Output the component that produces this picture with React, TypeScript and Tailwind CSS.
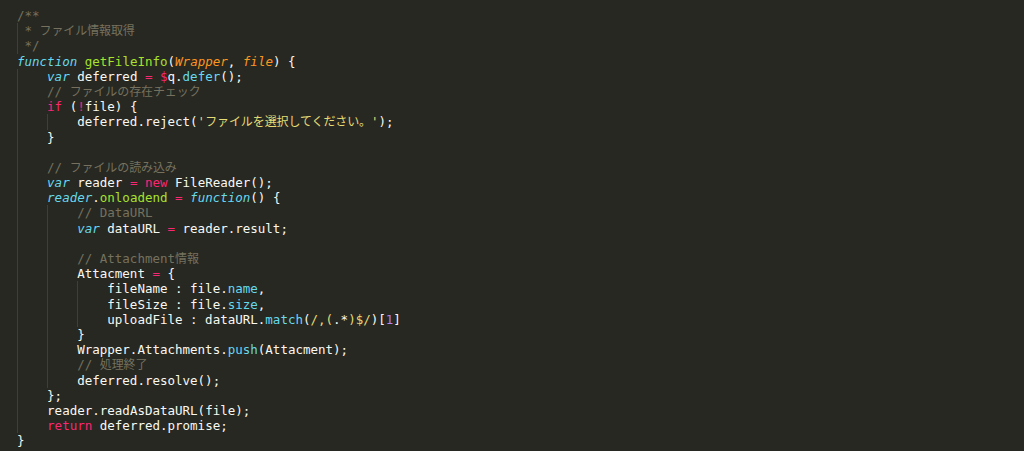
import React from "react";

type Tok = [string, string?];

const W = "text-[#f8f8f2]";
const C = "text-[#75715e]";
const K = "text-[#f92672]";
const S = "italic text-[#66d9ef]";
const F = "text-[#a6e22e]";
const P = "italic text-[#fd971f]";
const Y = "text-[#e6db74]";
const B = "text-[#66d9ef]";
const N = "text-[#ae81ff]";

type Line = { g: number; first?: boolean; t: Tok[] };

const lines: Line[] = [
  { g: 0, t: [["/**", C]] },
  { g: 1, first: true, t: [["* ファイル情報取得", C]] },
  { g: 1, first: true, t: [["*/", C]] },
  {
    g: 0,
    t: [["function", S], [" "], ["getFileInfo", F], ["("], ["Wrapper", P], [", "], ["file", P], [") {"]],
  },
  { g: 1, t: [["var", S], [" deferred "], ["=", K], [" "], ["$", K], ["q."], ["defer", B], ["();"]] },
  { g: 1, t: [["// ファイルの存在チェック", C]] },
  { g: 1, t: [["if", K], [" ("], ["!", K], ["file) {"]] },
  { g: 2, t: [["deferred.reject("], ["'ファイルを選択してください。'", Y], [");"]] },
  { g: 1, t: [["}"]] },
  { g: 1, t: [] },
  { g: 1, t: [["// ファイルの読み込み", C]] },
  { g: 1, t: [["var", S], [" reader "], ["=", K], [" "], ["new", K], [" FileReader();"]] },
  {
    g: 1,
    t: [["reader", S], ["."], ["onloadend", F], [" "], ["=", K], [" "], ["function", S], ["() {"]],
  },
  { g: 2, t: [["// DataURL", C]] },
  { g: 2, t: [["var", S], [" dataURL "], ["=", K], [" reader.result;"]] },
  { g: 2, t: [] },
  { g: 2, t: [["// Attachment情報", C]] },
  { g: 2, t: [["Attacment "], ["=", K], [" {"]] },
  { g: 3, t: [["fileName : file."], ["name", B], [","]] },
  { g: 3, t: [["fileSize : file."], ["size", B], [","]] },
  {
    g: 3,
    t: [["uploadFile : dataURL."], ["match", B], ["("], ["/,(", Y], [".*", W], [")$/", Y], [")["], ["1", N], ["]"]],
  },
  { g: 2, t: [["}"]] },
  { g: 2, t: [["Wrapper.Attachments."], ["push", B], ["(Attacment);"]] },
  { g: 2, t: [["// 処理終了", C]] },
  { g: 2, t: [["deferred.resolve();"]] },
  { g: 1, t: [["};"]] },
  { g: 1, t: [["reader.readAsDataURL(file);"]] },
  { g: 1, t: [["return", K], [" deferred.promise;"]] },
  { g: 0, t: [["}"]] },
];

const cjk = /([\u3000-\u30ff\u4e00-\u9fff]+)/;

function Text({ s }: { s: string }) {
  const parts = s.split(cjk).filter((p) => p.length > 0);
  return (
    <>
      {parts.map((p, i) =>
        cjk.test(p) ? (
          <span key={i} className="text-[12px] tracking-[-0.1px]">
            {p}
          </span>
        ) : (
          <React.Fragment key={i}>{p}</React.Fragment>
        )
      )}
    </>
  );
}

export default function App() {
  return (
    <div
      className="w-[1024px] h-[451px] overflow-hidden bg-[#272822] pl-[17px] pt-[8px] text-[12.5px] text-[#f8f8f2]"
      style={{ fontFamily: '"DejaVu Sans Mono", "Noto Sans CJK JP", monospace' }}
    >
      {lines.map((ln, i) => (
        <div key={i} className="flex items-stretch h-[15.2px] leading-[15.2px] whitespace-pre">
          {Array.from({ length: ln.g }).map((_, j) => (
            <span
              key={j}
              className={
                ln.first
                  ? "inline-block h-full w-[7.5px] border-l border-[#3e3f38]"
                  : "inline-block h-full w-[30.1px] border-l border-[#3e3f38]"
              }
            />
          ))}
          {ln.t.map((tk, k) => (
            <span key={k} className={tk[1] ?? W}>
              <Text s={tk[0]} />
            </span>
          ))}
        </div>
      ))}
    </div>
  );
}
